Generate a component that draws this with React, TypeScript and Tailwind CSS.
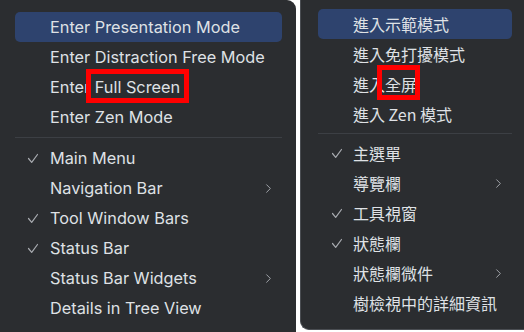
import { ChevronRight } from 'lucide-react';

type Item = { label: string; checked?: boolean; sub?: boolean; active?: boolean } | 'sep';

const leftItems: Item[] = [
  { label: 'Enter Presentation Mode', active: true },
  { label: 'Enter Distraction Free Mode' },
  { label: 'Enter Full Screen' },
  { label: 'Enter Zen Mode' },
  'sep',
  { label: 'Main Menu', checked: true },
  { label: 'Navigation Bar', sub: true },
  { label: 'Tool Window Bars', checked: true },
  { label: 'Status Bar', checked: true },
  { label: 'Status Bar Widgets', sub: true },
  { label: 'Details in Tree View' },
];

const rightItems: Item[] = [
  { label: '進入示範模式', active: true },
  { label: '進入免打擾模式' },
  { label: '進入全屏' },
  { label: '進入 Zen 模式' },
  'sep',
  { label: '主選單', checked: true },
  { label: '導覽欄', sub: true },
  { label: '工具視窗', checked: true },
  { label: '狀態欄', checked: true },
  { label: '狀態欄微件', sub: true },
  { label: '樹檢視中的詳細資訊' },
];

function Check() {
  return (
    <svg width="12" height="11" viewBox="0 0 12 11" fill="none">
      <path d="M1.5 5.5l3.2 3.8L10.5 1.5" stroke="#a8abb0" strokeWidth="1.2" strokeLinecap="round" strokeLinejoin="round" />
    </svg>
  );
}

function Menu({ items, checkPad, textPad, textSize, sepClass }: { items: Item[]; checkPad: string; textPad: string; textSize: string; sepClass: string }) {
  return (
    <div className="flex flex-col">
      {items.map((it, i) =>
        it === 'sep' ? (
          <div key={i} className={sepClass} />
        ) : (
          <div
            key={i}
            className={`relative flex h-[30px] items-center rounded-[5px] ${it.active ? 'bg-[#2e436e]' : ''}`}
          >
            {it.checked && <span className={`absolute top-[10px] ${checkPad}`}><Check /></span>}
            <span className={`${textPad} ${textSize} whitespace-pre text-[#dfe1e5]`}>{it.label}</span>
            {it.sub && (
              <ChevronRight className="absolute right-[6px] top-[8px] text-[#a8abb0]" size={15} strokeWidth={1.5} />
            )}
          </div>
        )
      )}
    </div>
  );
}

export default function App() {
  return (
    <div className="flex h-[332px] w-[524px] overflow-hidden bg-white font-['Inter','Noto_Sans_CJK_TC',sans-serif]">
      <div className="relative h-full w-[296px] rounded-tr-[9px] bg-[#2b2d30] pl-[15px] pr-[14px] pt-3">
        <Menu items={leftItems} checkPad="left-[12px]" textPad="pl-[35px]" textSize="text-[16.3px]" sepClass="my-[5px] h-px bg-[#3c3f44]" />
        <div className="absolute left-[86px] top-[69px] h-[34px] w-[103px] border-[5px] border-[#ff0000]" />
      </div>
      <div className="w-1" />
      <div className="relative h-[330px] flex-1 rounded-bl-[9px] border-b border-l border-[#4a4d52] bg-[#2b2d30] pl-[17px] pr-[12px] pt-[9px] font-['Noto_Sans_CJK_TC','Inter',sans-serif]">
        <Menu items={rightItems} checkPad="left-[13px]" textPad="pl-[35px]" textSize="text-[16px]" sepClass="my-[4px] h-px bg-[#3c3f44]" />
        <div className="absolute left-[76px] top-[65px] h-[35px] w-[43px] border-[5px] border-[#ff0000]" />
      </div>
    </div>
  );
}
